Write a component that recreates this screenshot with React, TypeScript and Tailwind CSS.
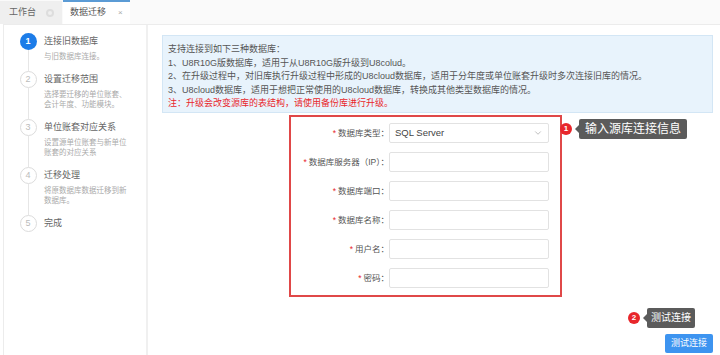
import React from "react";
import { ChevronDown } from "lucide-react";

const steps = [
  { n: 1, title: "连接旧数据库", desc: ["与旧数据库连接。"] },
  { n: 2, title: "设置迁移范围", desc: ["选择要迁移的单位账套、", "会计年度、功能模块。"] },
  { n: 3, title: "单位账套对应关系", desc: ["设置源单位账套与新单位", "账套的对应关系"] },
  { n: 4, title: "迁移处理", desc: ["将原数据库数据迁移到新", "数据库。"] },
  { n: 5, title: "完成", desc: [] },
];

const fields = [
  "数据库服务器（IP）：",
  "数据库端口：",
  "数据库名称：",
  "用户名：",
  "密码：",
];

const Callout = ({ num, text, big }: { num: number; text: string; big?: boolean }) => (
  <div className="flex items-center whitespace-nowrap">
    <div className="w-[12px] h-[12px] rounded-full bg-[#e8262b] text-white text-[8px] font-bold flex items-center justify-center leading-none">
      {num}
    </div>
    <div className="ml-[3px] w-0 h-0 border-y-[4px] border-y-transparent border-r-[4px] border-r-[#5b5b5b]" />
    <div
      className={
        big
          ? "bg-[#5b5b5b] text-white text-[12px] leading-none px-[6px] py-[4px] rounded-[2px]"
          : "bg-[#5b5b5b] text-white text-[10px] leading-none px-[4px] py-[5px] rounded-[2px]"
      }
    >
      {text}
    </div>
  </div>
);

export default function App() {
  return (
    <div
      className="w-[720px] h-[355px] bg-white overflow-hidden flex flex-col text-[#555]"
      style={{ fontFamily: '"Liberation Sans", "Noto Sans CJK SC", sans-serif' }}
    >
      {/* tabs */}
      <div className="h-[24px] flex items-end bg-[#fafafa] shrink-0 whitespace-nowrap">
        <div className="h-[23px] w-[62px] bg-[#efefef] flex items-center pl-[9px] gap-[10px] text-[9px] text-[#666]">
          工作台
          <span className="w-[8px] h-[8px] rounded-full border-[2px] border-[#ddd]" />
        </div>
        <div className="h-[24px] w-[67px] ml-[1px] bg-white border-t-2 border-[#5b9bd5] flex items-center pl-[7px] gap-[12px] text-[9px] text-[#555]">
          数据迁移
          <span className="text-[8px] text-[#aaa]">×</span>
        </div>
      </div>

      {/* body */}
      <div className="flex-1 flex border-t border-[#ececec] ml-[3px] border-l">
        {/* steps */}
        <div className="w-[144px] border-r-2 border-[#f0f0f0] pl-[15px] pt-[8px]">
          {steps.map((s, i) => (
            <div key={s.n} className="flex">
              <div className="flex flex-col items-center w-[18px]">
                {s.n === 1 ? (
                  <div className="w-[17px] h-[17px] shrink-0 rounded-full bg-[#1c7ce8] text-white text-[9px] font-bold flex items-center justify-center">
                    1
                  </div>
                ) : (
                  <div className="w-[17px] h-[17px] shrink-0 rounded-full border border-[#dcdcdc] text-[#bbb] text-[9px] flex items-center justify-center">
                    {s.n}
                  </div>
                )}
                {i < steps.length - 1 && <div className="flex-1 w-px bg-[#e6e6e6]" />}
              </div>
              <div className="pl-[7px] pb-[9px]">
                <div className="text-[9px] text-[#666] leading-[17px]">{s.title}</div>
                <div className="mt-[2px] text-[7.5px] text-[#aaa] leading-[10px]">
                  {s.desc.map((d) => (
                    <div key={d}>{d}</div>
                  ))}
                </div>
              </div>
            </div>
          ))}
        </div>

        {/* main */}
        <div className="flex-1 pl-[14px] pt-[10px] pr-[7px] flex flex-col">
          <div className="h-[78px] bg-[#e8f3fc] border border-[#d3e6f5] px-[5px] pt-[7px] text-[9px] leading-[13.5px] text-[#555]">
            <div>支持连接到如下三种数据库：</div>
            <div>1、U8R10G版数据库，适用于从U8R10G版升级到U8colud。</div>
            <div>2、在升级过程中，对旧库执行升级过程中形成的U8cloud数据库，适用于分年度或单位账套升级时多次连接旧库的情况。</div>
            <div>3、U8cloud数据库，适用于想把正常使用的U8cloud数据库，转换成其他类型数据库的情况。</div>
            <div className="text-[#e8262b]">注：升级会改变源库的表结构，请使用备份库进行升级。</div>
          </div>

          <div className="relative ml-[127px] mt-[2px] w-[273px] h-[182px] border-2 border-[#e04848] pt-[6px] pl-[2px]">
            <div className="flex items-center h-[20px]">
              <div className="w-[96px] text-right text-[8.5px] text-[#555]">
                <span className="text-[#e8262b] mr-[2px]">*</span>数据库类型：
              </div>
              <div className="w-[160px] h-[20px] border border-[#e2e2e2] rounded-[2px] flex items-center justify-between px-[5px] text-[9.5px] text-[#444]">
                SQL Server
                <ChevronDown size={10} strokeWidth={1.5} className="text-[#999]" />
              </div>
            </div>
            {fields.map((f) => (
              <div key={f} className="flex items-center h-[20px] mt-[9px]">
                <div className="w-[96px] text-right text-[8.5px] text-[#555] whitespace-nowrap">
                  <span className="text-[#e8262b] mr-[2px]">*</span>
                  {f}
                </div>
                <div className="w-[160px] h-[20px] border border-[#e2e2e2] rounded-[2px]" />
              </div>
            ))}
            <div className="absolute left-[269px] top-[2px]">
              <Callout num={1} text="输入源库连接信息" big />
            </div>
          </div>

          <div className="relative flex justify-end mt-[37px]">
            <div className="absolute right-[18px] top-[-26px]">
              <Callout num={2} text="测试连接" />
            </div>
            <div className="w-[48px] h-[19px] bg-[#3d94f0] rounded-[2px] text-white text-[9px] flex items-center justify-center">
              测试连接
            </div>
          </div>
        </div>
      </div>
    </div>
  );
}
